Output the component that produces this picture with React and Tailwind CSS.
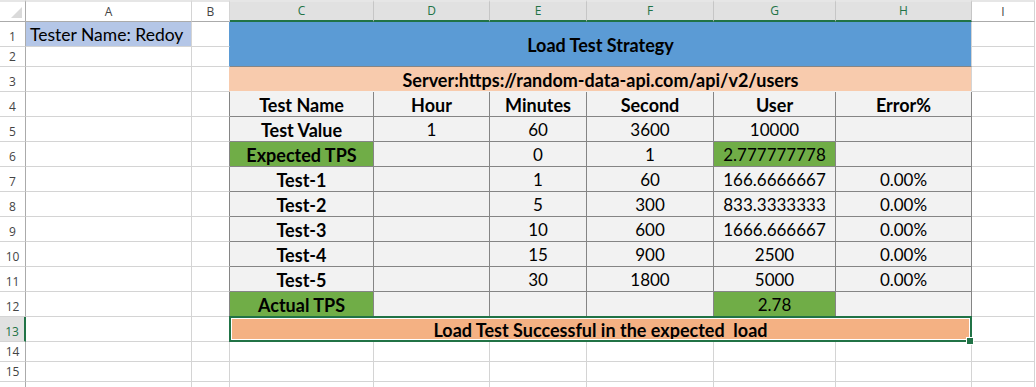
import React from 'react';

const LETTERS = ['A', 'B', 'C', 'D', 'E', 'F', 'G', 'H', 'I'];
const SELECTED = ['C', 'D', 'E', 'F', 'G', 'H'];

// light sheet gridline / dark table border
const GRID = 'border-r border-b border-[#d4d4d4]';
const LINE = 'border-r border-b border-[#858585]';

const tableRows = [
  { n: 4, cells: ['Test Name', 'Hour', 'Minutes', 'Second', 'User', 'Error%'], allBold: true },
  { n: 5, cells: ['Test Value', '1', '60', '3600', '10000', ''] },
  { n: 6, cells: ['Expected TPS', '', '0', '1', '2.777777778', ''], green: true },
  { n: 7, cells: ['Test-1', '', '1', '60', '166.6666667', '0.00%'] },
  { n: 8, cells: ['Test-2', '', '5', '300', '833.3333333', '0.00%'] },
  { n: 9, cells: ['Test-3', '', '10', '600', '1666.666667', '0.00%'] },
  { n: 10, cells: ['Test-4', '', '15', '900', '2500', '0.00%'] },
  { n: 11, cells: ['Test-5', '', '30', '1800', '5000', '0.00%'] },
  { n: 12, cells: ['Actual TPS', '', '', '', '2.78', ''], green: true },
];

function Corner() {
  return (
    <div className="bg-white border-t-2 border-t-[#e6e6e6] border-r border-r-[#ababab] border-b border-b-[#ababab]">
      <svg width="25" height="19" viewBox="0 0 25 19">
        <polygon points="22,5 22,16 11,16" fill="#dadada" />
      </svg>
    </div>
  );
}

function ColHeader({ letter }) {
  const on = SELECTED.includes(letter);
  return (
    <div
      className={
        on
          ? 'flex items-center justify-center bg-[#e1e1e1] border-t-2 border-t-[#e6e6e6] border-r border-r-[#c6c6c6] border-b-2 border-b-[#217346] text-[#217346]'
          : 'flex items-center justify-center bg-white border-t-2 border-t-[#e6e6e6] border-r border-r-[#d4d4d4] border-b border-b-[#ababab] text-[#444]'
      }
    >
      {letter}
    </div>
  );
}

function RowHeader({ n, active }) {
  return (
    <div
      className={
        active
          ? 'flex items-end justify-center pb-[2px] leading-[14px] bg-[#e1e1e1] text-[#217346] border-r-2 border-r-[#217346] border-b border-b-[#d4d4d4]'
          : 'flex items-end justify-center pb-[2px] leading-[14px] bg-white text-[#444] border-r border-r-[#ababab] border-b border-b-[#d4d4d4]'
      }
    >
      {n}
    </div>
  );
}

function Blank({ className = '' }) {
  return <div className={`${GRID} ${className}`} />;
}

function TableCell({ children, bold, green }) {
  return (
    <div
      className={`flex items-end justify-center pb-px leading-[20px] ${LINE} ${green ? 'bg-[#70ad47]' : 'bg-[#f2f2f2]'} ${bold ? 'font-bold text-[18px]' : 'text-[17px]'}`}
    >
      {children}
    </div>
  );
}

function PlainRow({ n }) {
  return (
    <>
      <RowHeader n={n} />
      {LETTERS.map((l) => (
        <Blank key={l} />
      ))}
    </>
  );
}

export default function App() {
  return (
    <div className="w-[1036px] h-[387px] overflow-hidden bg-white">
      <div className="grid w-[1035px] grid-cols-[26px_166px_38px_144px_116px_97px_127px_122px_136px_63px] grid-rows-[22px_25px_20px_25px_repeat(10,25px)_20px_20px_5px] font-['Lato',sans-serif] text-black">
        {/* column headers */}
        <Corner />
        {LETTERS.map((l) => (
          <div key={l} className="contents font-['Open_Sans',sans-serif] text-[12px]">
            <ColHeader letter={l} />
          </div>
        ))}

        {/* row 1 */}
        <div className="contents font-['Open_Sans',sans-serif] text-[12px]">
          <RowHeader n={1} />
        </div>
        <div className="flex items-end pl-[4px] pb-px leading-[20px] text-[17.5px] bg-[#b4c6e7] border-r border-b border-[#d4d4d4]">
          Tester Name: Redoy
        </div>
        <div className="border-r border-b border-b-[#d4d4d4] border-r-[#5b9bd5]" />
        <div className="col-span-6 row-span-2 flex items-center justify-center pt-px leading-[20px] text-[18px] font-bold bg-[#5b9bd5] border-r border-r-[#d4d4d4] border-b border-b-[#858585]">
          Load Test Strategy
        </div>
        <Blank />

        {/* row 2 */}
        <div className="contents font-['Open_Sans',sans-serif] text-[12px]">
          <RowHeader n={2} />
        </div>
        <Blank />
        <div className="border-r border-b border-b-[#d4d4d4] border-r-[#5b9bd5]" />
        <Blank />

        {/* row 3 */}
        <div className="contents font-['Open_Sans',sans-serif] text-[12px]">
          <RowHeader n={3} />
        </div>
        <Blank />
        <div className="border-r border-b border-b-[#d4d4d4] border-r-[#f8cbad]" />
        <div className="col-span-6 flex items-end justify-center pb-px leading-[20px] text-[18px] font-bold bg-[#f8cbad] border-r border-r-[#d4d4d4] border-b border-b-[#f2f2f2]">
          Server:https://random-data-api.com/api/v2/users
        </div>
        <Blank />

        {/* table rows 4-12 */}
        {tableRows.map((row) => (
          <React.Fragment key={row.n}>
            <div className="contents font-['Open_Sans',sans-serif] text-[12px]">
              <RowHeader n={row.n} />
            </div>
            <Blank />
            <div className="border-r border-b border-b-[#d4d4d4] border-r-[#858585]" />
            {row.cells.map((c, i) => (
              <TableCell
                key={i}
                bold={i === 0 || row.allBold}
                green={row.green && (i === 0 || i === 4)}
              >
                {c}
              </TableCell>
            ))}
            <Blank />
          </React.Fragment>
        ))}

        {/* row 13 - selected merged result */}
        <div className="contents font-['Open_Sans',sans-serif] text-[12px]">
          <RowHeader n={13} active />
        </div>
        <Blank />
        <Blank />
        <div className="relative col-span-6 flex items-end justify-center pb-px leading-[20px] text-[18px] font-bold bg-[#f4b183] border-r border-b border-[#d4d4d4]">
          <span className="whitespace-pre">Load Test Successful in the expected  load</span>
          <div className="absolute -inset-px z-10 border-2 border-[#217346] shadow-[inset_0_0_0_1px_#ffffff]" />
          <div className="absolute -right-[3px] -bottom-[4px] z-20 w-[8px] h-[8px] bg-[#217346] border border-white" />
        </div>
        <Blank />

        <div className="contents font-['Open_Sans',sans-serif] text-[12px]">
          <PlainRow n={14} />
        </div>
        <div className="contents font-['Open_Sans',sans-serif] text-[12px]">
          <PlainRow n={15} />
        </div>

        {/* row 16, cut off by the window */}
        <div className="bg-white border-r border-r-[#ababab]" />
        {LETTERS.map((l) => (
          <div key={l} className="border-r border-r-[#d4d4d4]" />
        ))}
      </div>
    </div>
  );
}
